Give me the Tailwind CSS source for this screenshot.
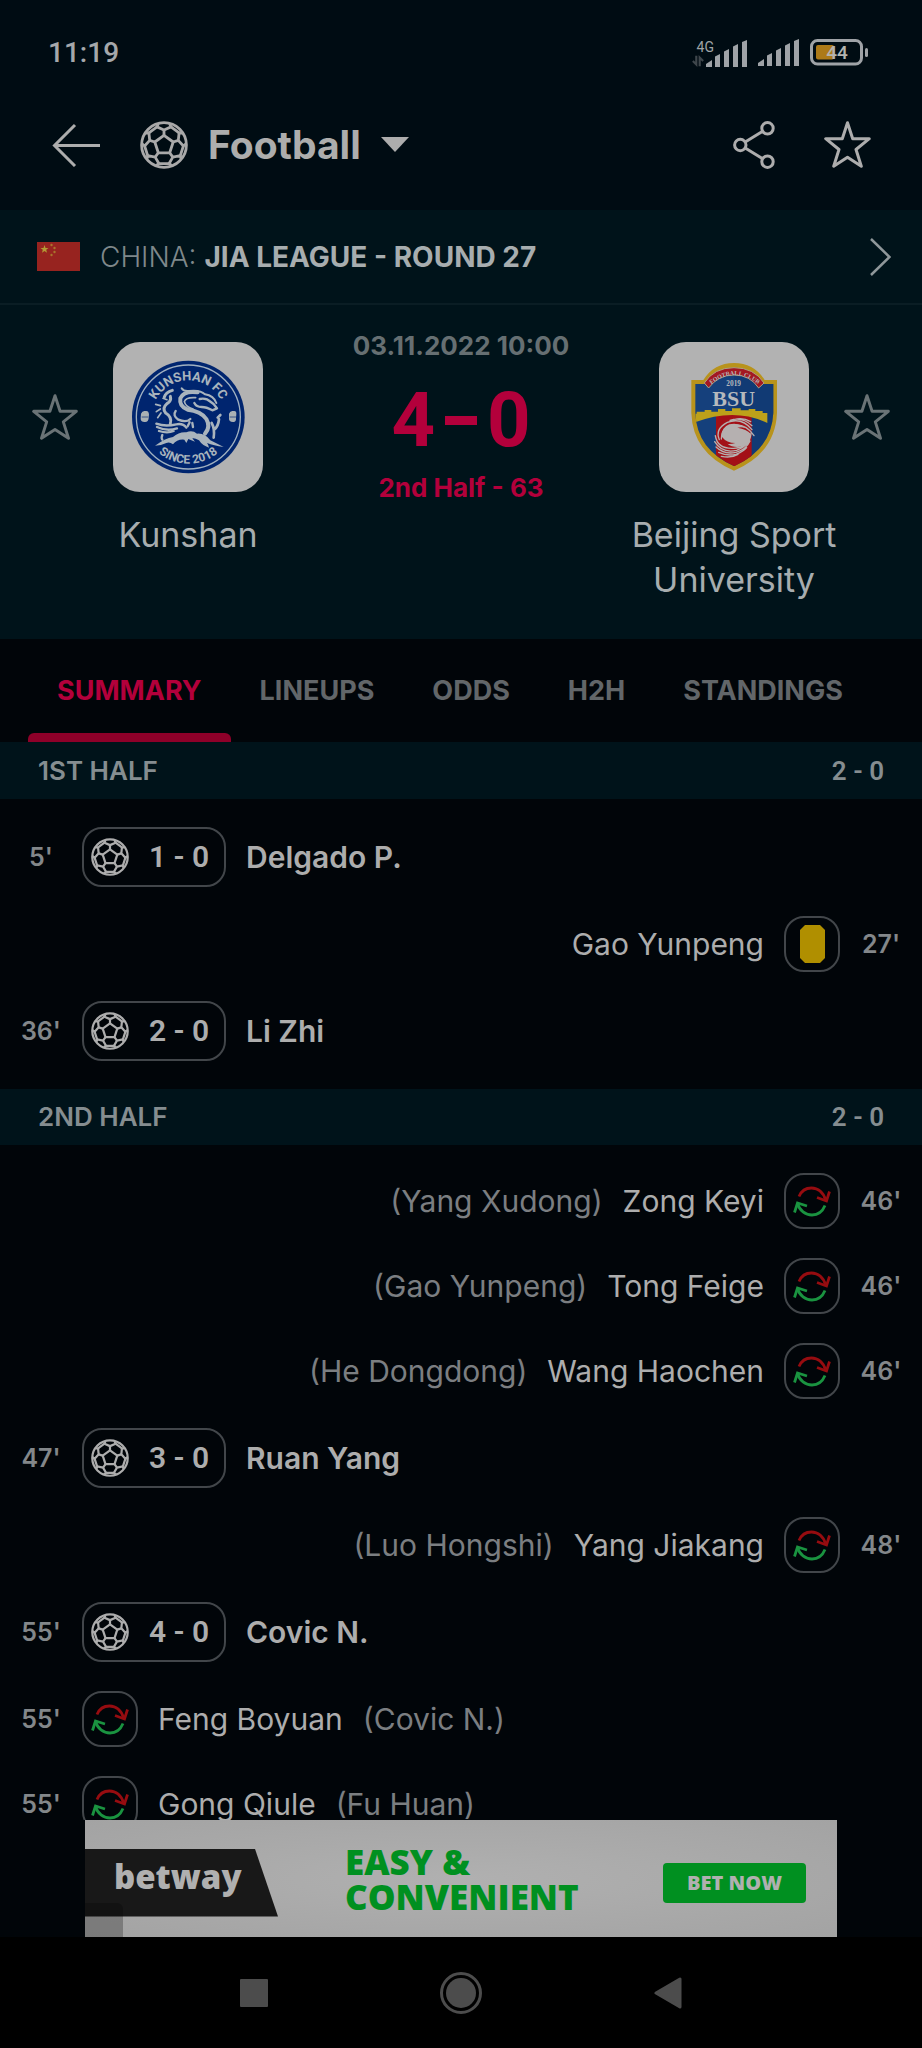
<!DOCTYPE html>
<html lang="en">
<head>
<meta charset="utf-8">
<meta name="viewport" content="width=device-width, initial-scale=1">
<title>Kunshan - Beijing Sport University</title>
<script src="https://cdn.jsdelivr.net/npm/@tailwindcss/browser@4"></script>
</head>
<body class="bg-[#010509] text-[#adadad] font-['Inter','Liberation_Sans',sans-serif]">

<svg class="hidden" aria-hidden="true">
  <symbol id="ball" viewBox="0 0 48 48">
    <g fill="none" stroke="currentColor" stroke-width="2.8" stroke-linejoin="round">
      <circle cx="24" cy="24" r="22.4"/>
      <path d="M24 14.3 33.2 21 29.7 31.8H18.3L14.8 21Z"/>
      <path d="M24 14.3V9M33.2 21l5.1-1.6M29.7 31.8l3.1 4.3M18.3 31.8l-3.1 4.3M14.8 21l-5.1-1.6"/>
      <path d="M18.3 2.7 17 5.9 24 9l7-3.1-1.3-3.2M42.5 12l-3.4-.2-.8 7.6 5.1 5.6 2.6-2.2M41.1 37.8l-.8-3.2-7.5 1.5-3.8 6.6 2.9 1.8M6.9 37.8l.8-3.2 7.5 1.5 3.8 6.6-2.9 1.8M5.5 12l3.4-.2.8 7.6L4.6 25 2 22.8"/>
      <path d="M31 5.9l8.1 5.900M43.4 25l-3.1 9.600M29 42.700H19M7.7 34.600 4.600 25M8.900 11.800 17 5.900"/>
    </g>
  </symbol>
  <symbol id="star" viewBox="0 0 47 47">
    <path d="M23.500 1.800 28.700 17.700H45.300L32 28.500 37.300 45.200 23.500 36.200 9.700 45.200 15 28.500 1.700 17.700H18.300Z" fill="none" stroke="currentColor" stroke-width="3" stroke-linejoin="round"/>
  </symbol>
  <symbol id="swap" viewBox="0 0 38 32">
    <g fill="none" stroke-width="2.800">
      <path d="M6 11.500C8.500 5.500 13 3 18.500 3 25 3 30.500 7.500 32.500 15" stroke="#960c10"/>
      <path d="M24 12.500 33.500 16 36.500 6.500" stroke="#960c10"/>
      <path d="M32 20.500C29.500 26.500 24.500 30 19 30 12.500 30 6.500 25.500 4.500 18.500" stroke="#1a9340"/>
      <path d="M1.500 27.500 4.500 18 14 21" stroke="#1a9340"/>
    </g>
  </symbol>
  <symbol id="signal" viewBox="0 0 42 27">
    <path d="M0 27v-3l6-4v7ZM9 27V16.500l5-2.500v13ZM18 27V11.500L23 9v18ZM27 27V6.500L32 4v23ZM36 27V2l5-2v27Z" fill="#9fa3a7"/>
  </symbol>
</svg>

<div class="flex h-screen flex-col">
  <header class="bg-[#000c13]">
    <div class="flex h-[81px] items-center justify-between pt-6 pr-[53px] pl-12">
      <span class="font-['Roboto'] text-[28px] leading-8 font-medium text-[#a5a8ab]">11:19</span>
      <div class="flex items-center gap-2.5">
        <div class="flex items-end">
          <div class="-mr-2 flex flex-col items-end">
            <span class="font-['Roboto'] text-[14px] leading-4 text-[#9fa3a7]">4G</span>
            <svg class="mr-2.5 h-3 w-3" viewBox="0 0 14 12" fill="none" stroke="#3f474c" stroke-width="2.500"><path d="M5 0v10L1 6M9 12V2L13 6"/></svg>
          </div>
          <svg class="h-[27px] w-[42px]"><use href="#signal"/></svg>
        </div>
        <svg class="h-[27px] w-[42px]"><use href="#signal"/></svg>
        <svg class="h-[27px] w-[59px]" viewBox="0 0 59 27" aria-label="Battery 44%">
          <rect x="1.500" y="1.500" width="50" height="23.500" rx="6" fill="none" stroke="#9fa3a7" stroke-width="3"/>
          <rect x="6" y="6" width="18" height="14.500" rx="2" fill="#ad7a18"/>
          <rect x="55" y="9" width="3" height="9" rx="1.500" fill="#9fa3a7"/>
          <text x="27" y="20" text-anchor="middle" font-family="Roboto" font-weight="500" font-size="19" fill="#b4b4b0">44</text>
        </svg>
      </div>
    </div>
    <div class="flex h-[129px] items-center pr-[51px] pb-0.5 pl-[52px]">
      <button type="button" aria-label="Back">
        <svg class="h-[44px] w-[48px]" viewBox="0 0 48 44" fill="none" stroke="#adadad" stroke-width="3"><path d="M23 2 2.500 22.500 23 43M2.500 22.500H48"/></svg>
      </button>
      <button type="button" class="ml-10 flex items-center gap-5">
        <svg class="size-[48px] text-[#a9a9a9]"><use href="#ball"/></svg>
        <span class="text-[39px] leading-12 font-bold">Football</span>
        <svg class="h-[15px] w-7" viewBox="0 0 28 15"><path d="M0 0H28L14 15Z" fill="#adadad"/></svg>
      </button>
      <div class="ml-auto flex items-center gap-[49px]">
        <button type="button" aria-label="Share">
          <svg class="h-[48px] w-[42px]" viewBox="0 0 42 48" fill="none" stroke="#adadad" stroke-width="3"><circle cx="34.500" cy="7.300" r="5.700"/><circle cx="7.300" cy="24" r="5.700"/><circle cx="34.500" cy="40.700" r="5.700"/><path d="M12.200 21 29.700 10.300M12.200 27 29.700 37.700"/></svg>
        </button>
        <button type="button" aria-label="Add match to favourites"><svg class="size-[47px]"><use href="#star"/></svg></button>
      </div>
    </div>
  </header>

  <section class="bg-[#00131a]">
    <a href="#league" class="flex h-[95px] items-center border-b-2 border-[#0a1d24] pr-[31px] pl-[37px] text-[28px] leading-8">
      <svg class="h-[29px] w-[43px]" viewBox="0 0 43 29"><path fill="#97231f" d="M0 0H43V29H0Z"/><path fill="#b39b35" d="m7.500 3 1 3h3L9.200 7.800l.8 3L7.500 9 5 10.800l.8-3L3.500 6h3Z"/><g fill="#a9742c"><circle cx="14.500" cy="3" r="1.200"/><circle cx="17.500" cy="6" r="1.200"/><circle cx="17.500" cy="10" r="1.200"/><circle cx="14.500" cy="13" r="1.200"/></g></svg>
      <span class="ml-5 font-light text-[#7f888b]">CHINA:</span>
      <span class="ml-2 font-bold text-[#a7adaf]">JIA LEAGUE - ROUND 27</span>
      <svg class="ml-auto h-[38px] w-[21px]" viewBox="0 0 21 38" fill="none" stroke="#8f979a" stroke-width="2.500"><path d="M1 1 19.500 19 1 37"/></svg>
    </a>

    <div class="flex min-h-[334px] items-start justify-between px-8 pt-[25px] pb-6">
      <div class="flex pt-3">
        <button type="button" aria-label="Add Kunshan to favourites" class="flex h-[150px] items-center text-[#6a7376]"><svg class="size-[46px]"><use href="#star"/></svg></button>
        <div class="flex w-[220px] flex-col items-center">
          <div class="size-[150px] overflow-hidden rounded-[27px] bg-[#b2b2b2]">
            <svg class="size-full" viewBox="8 7 450 450" aria-label="Kunshan FC">
              <defs><path id="kt" d="M124 232a110 110 0 0 1 220 0"/><path id="kb" d="M94 232a140 140 0 0 0 280 0"/></defs>
              <circle cx="234" cy="232" r="169" fill="#00256f"/>
              <circle cx="234" cy="232" r="156" fill="none" stroke="#9fb0c0" stroke-width="4"/>
              <g font-family="'Liberation Sans Narrow', Roboto" font-weight="700" font-size="39" fill="#a9b4bd" text-anchor="middle">
                <text><textPath href="#kt" startOffset="50%">KUNSHAN FC</textPath></text>
                <text font-size="36"><textPath href="#kb" startOffset="50%">SINCE 2018</textPath></text>
              </g>
              <g fill="#a9b0b4"><path d="M92 222q4-10 13-8 10-2 11 10l-1 12q-1 12-12 11-13 0-12-12ZM356 222q4-10 13-8 10-2 9 10l-1 12q1 12-9 11-13 0-12-12Z"/></g>
              <g fill="none" stroke="#00256f" stroke-width="2"><path d="M94 232h20M358 232h20"/></g>
              <g fill="none" stroke="#a9b4bd" stroke-linecap="round" stroke-linejoin="round">
                <path d="M214 146q6 10 22 8 34-4 48 10 26 4 34 26" stroke-width="6"/>
                <path d="M268 178q20-4 32 8 12 6 20 20l-14 6q-18-10-32-10-16 0-22-12" stroke-width="7"/>
                <path d="M262 158q-42-6-52 18-4 24 22 34 40 4 56 28 14 24-4 44" stroke-width="12"/>
                <path d="M256 174q-30-2-34 12 4 16 26 22" stroke-width="5"/>
                <path d="M186 152q-20 6-24 20M180 170q4 14-10 22-16 14-4 28 20 12 14 32" stroke-width="9"/>
                <path d="M170 180l-12-4M150 198l-14-4M150 208l-12 8M152 220l-10 14" stroke-width="5"/>
                <path d="M196 214q-10 14 8 26 24 10 36-2M238 248l-6 12M246 250l2 12" stroke-width="7"/>
                <path d="M138 252q26 10 60 2 20-4 30 10M140 262q30 14 60 4M146 274q26 8 44 0M156 286q-4 10 0 14" stroke-width="7"/>
                <path d="M304 250q10 18 6 44M326 238q-2 20-12 30M330 226l-8 8" stroke-width="8"/>
              </g>
              <path d="M134 318q30-22 54-26 18-16 40-14 18-8 32 4 24-2 40 20 20 10 40 20-30-4-50-12 6 8 6 14-20-6-30-22-14-8-20-6l8 10-20-8-6 12-6-10q-22-2-34 14-10-8-20-4-16 8-34 8Z" fill="#a9b4bd"/>
            </svg>
          </div>
          <span class="mt-5 text-center text-[34px] leading-[45px] text-[#a7adaf]">Kunshan</span>
        </div>
      </div>

      <div class="flex flex-col items-center text-[26px] leading-8 font-bold text-[#b3003b]">
        <time class="text-[#666f72]">03.11.2022 10:00</time>
        <div class="mt-5 flex items-center gap-2.5 font-['Roboto'] text-[76px] leading-[76px] font-bold"><span>4</span><span class="h-[9px] w-[32px] bg-[#b3003b]" role="img" aria-label="-"></span><span>0</span></div>
        <span class="mt-3.5">2nd Half - 63</span>
      </div>

      <div class="flex pt-3">
        <div class="flex w-[220px] flex-col items-center">
          <div class="size-[150px] overflow-hidden rounded-[27px] bg-[#b2b2b2]">
            <svg class="size-full" viewBox="27 7 450 450" aria-label="Beijing Sport University">
              <defs><path id="bt" d="M181 136q72-60 146 0"/><clipPath id="sh"><path d="M136 132H370V220q-4 108-117 160-113-52-117-160Z"/></clipPath></defs>
              <path d="M124 121H160Q192 70 252 70 312 70 344 121H381V220Q376 340 252 393 128 340 124 220Z" fill="#b8931c"/>
              <path d="M136 133H168Q198 84 252 84 308 84 338 133H370V220Q364 330 252 379 140 330 136 220Z" fill="#15407c"/>
              <path d="M252 84q56 0 86 49h32v87q-6 110-118 159Z" fill="#0c3168" opacity=".4"/>
              <g clip-path="url(#sh)">
                <path d="M198 222H305V390H198Z" fill="#a31017"/>
                <path d="M130 222h10v-6h24v-5h20v5h20v-8h22v6h20v-8h26v6h24v-4h20v6h22v6h14v30q-100-48-222 0Z" fill="#bda11a"/>
              </g>
              <path d="M163 130Q192 84 252 84 312 84 342 130L326 145Q300 106 252 106 204 106 176 145Z" fill="#a31822" stroke="#b0a080" stroke-width="3"/>
              <g fill="#b5b9bd" font-family="'Liberation Serif'" font-weight="700" text-anchor="middle">
                <text font-size="18"><textPath href="#bt" startOffset="50%">FOOTBALL CLUB</textPath></text>
                <text x="251" y="138" font-size="22">2019</text>
                <text x="251" y="200" font-size="66">BSU</text>
              </g>
              <g fill="none" stroke="#b5b0b0" stroke-width="4" stroke-linecap="round">
                <path d="M306 270q-30-38-74-22-38 20-24 52M312 288q-26-40-70-30-30 12-28 40M306 258q-30-28-66-16M302 246q-24-14-50-6"/>
                <path d="M196 288q6 40 54 38 46-2 54-48M194 306q22 36 66 26 38-14 42-44M198 322q26 24 60 16 30-8 42-34M206 338q26 12 52 6 22-8 32-20M214 350q30 6 50-6"/>
              </g>
              <path d="M296 270q-30-24-58-16-26 10-22 38 14 18 40 18-16 4-24 2 18 14 44 8 28-10 26-38-12-14-40-18 20-4 34 6Z" fill="#b5b0b0"/>
            </svg>
          </div>
          <span class="mt-5 text-center text-[34px] leading-[45px] text-[#a7adaf]">Beijing Sport University</span>
        </div>
        <button type="button" aria-label="Add Beijing Sport University to favourites" class="flex h-[150px] items-center text-[#6a7376]"><svg class="size-[46px]"><use href="#star"/></svg></button>
      </div>
    </div>
  </section>

  <nav class="flex h-[103px] shrink-0 pl-7 text-[27px] leading-8 font-bold text-[#626669]">
    <button type="button" class="relative px-[29px] text-[#b3003b]">SUMMARY<span class="absolute inset-x-0 bottom-0 h-[9px] rounded-t-md bg-[#8e0029]"></span></button>
    <button type="button" class="px-[29px]">LINEUPS</button>
    <button type="button" class="px-[29px]">ODDS</button>
    <button type="button" class="px-[29px]">H2H</button>
    <button type="button" class="px-[29px]">STANDINGS</button>
  </nav>

  <main class="min-h-0 flex-1 overflow-y-auto text-[30px] leading-9 [scrollbar-width:none]">
    <h2 class="flex h-[57px] items-center justify-between bg-[#00131a] px-[38px] text-[26px] font-semibold text-[#858d90]"><span>1ST HALF</span><span class="font-['Roboto']">2 - 0</span></h2>
    <ul class="flex flex-col gap-[29px] pt-7 pb-7">
      <li class="flex items-center">
        <span class="w-[82px] text-center text-[25px] font-semibold text-[#83878a]">5'</span>
        <span class="flex h-[60px] w-[144px] items-center gap-5 rounded-[20px] border-2 border-[#42464a] pl-[7px] font-['Roboto'] font-semibold"><svg class="size-[38px]"><use href="#ball"/></svg>1 - 0</span>
        <span class="ml-5 font-semibold">Delgado P.</span>
      </li>
      <li class="flex flex-row-reverse items-center">
        <span class="w-[82px] text-center text-[25px] font-semibold text-[#83878a]">27'</span>
        <span class="flex size-[56px] items-center justify-center rounded-[20px] border-2 border-[#42464a]"><svg class="h-[38px] w-[25px]" viewBox="0 0 25 38"><path d="M5 0H20L25 5V33L20 38H5L0 33V5Z" fill="#b08f00"/></svg></span>
        <span class="mr-5">Gao Yunpeng</span>
      </li>
      <li class="flex items-center">
        <span class="w-[82px] text-center text-[25px] font-semibold text-[#83878a]">36'</span>
        <span class="flex h-[60px] w-[144px] items-center gap-5 rounded-[20px] border-2 border-[#42464a] pl-[7px] font-['Roboto'] font-semibold"><svg class="size-[38px]"><use href="#ball"/></svg>2 - 0</span>
        <span class="ml-5 font-semibold">Li Zhi</span>
      </li>
    </ul>
    <h2 class="flex h-[56px] items-center justify-between bg-[#00131a] px-[38px] text-[26px] font-semibold text-[#858d90]"><span>2ND HALF</span><span class="font-['Roboto']">2 - 0</span></h2>
    <ul class="flex flex-col gap-[29px] pt-7 pb-7">
      <li class="flex flex-row-reverse items-center">
        <span class="w-[82px] text-center text-[25px] font-semibold text-[#83878a]">46'</span>
        <span class="flex size-[56px] items-center justify-center rounded-[20px] border-2 border-[#42464a]"><svg class="h-8 w-[38px]"><use href="#swap"/></svg></span>
        <span class="mr-5">Zong Keyi</span><span class="mr-5 text-[#7b7e81]">(Yang Xudong)</span>
      </li>
      <li class="flex flex-row-reverse items-center">
        <span class="w-[82px] text-center text-[25px] font-semibold text-[#83878a]">46'</span>
        <span class="flex size-[56px] items-center justify-center rounded-[20px] border-2 border-[#42464a]"><svg class="h-8 w-[38px]"><use href="#swap"/></svg></span>
        <span class="mr-5">Tong Feige</span><span class="mr-5 text-[#7b7e81]">(Gao Yunpeng)</span>
      </li>
      <li class="flex flex-row-reverse items-center">
        <span class="w-[82px] text-center text-[25px] font-semibold text-[#83878a]">46'</span>
        <span class="flex size-[56px] items-center justify-center rounded-[20px] border-2 border-[#42464a]"><svg class="h-8 w-[38px]"><use href="#swap"/></svg></span>
        <span class="mr-5">Wang Haochen</span><span class="mr-5 text-[#7b7e81]">(He Dongdong)</span>
      </li>
      <li class="flex items-center">
        <span class="w-[82px] text-center text-[25px] font-semibold text-[#83878a]">47'</span>
        <span class="flex h-[60px] w-[144px] items-center gap-5 rounded-[20px] border-2 border-[#42464a] pl-[7px] font-['Roboto'] font-semibold"><svg class="size-[38px]"><use href="#ball"/></svg>3 - 0</span>
        <span class="ml-5 font-semibold">Ruan Yang</span>
      </li>
      <li class="flex flex-row-reverse items-center">
        <span class="w-[82px] text-center text-[25px] font-semibold text-[#83878a]">48'</span>
        <span class="flex size-[56px] items-center justify-center rounded-[20px] border-2 border-[#42464a]"><svg class="h-8 w-[38px]"><use href="#swap"/></svg></span>
        <span class="mr-5">Yang Jiakang</span><span class="mr-5 text-[#7b7e81]">(Luo Hongshi)</span>
      </li>
      <li class="flex items-center">
        <span class="w-[82px] text-center text-[25px] font-semibold text-[#83878a]">55'</span>
        <span class="flex h-[60px] w-[144px] items-center gap-5 rounded-[20px] border-2 border-[#42464a] pl-[7px] font-['Roboto'] font-semibold"><svg class="size-[38px]"><use href="#ball"/></svg>4 - 0</span>
        <span class="ml-5 font-semibold">Covic N.</span>
      </li>
      <li class="flex items-center">
        <span class="w-[82px] text-center text-[25px] font-semibold text-[#83878a]">55'</span>
        <span class="flex size-[56px] items-center justify-center rounded-[20px] border-2 border-[#42464a]"><svg class="h-8 w-[38px]"><use href="#swap"/></svg></span>
        <span class="ml-5">Feng Boyuan</span><span class="ml-5 text-[#7b7e81]">(Covic N.)</span>
      </li>
      <li class="flex items-center">
        <span class="w-[82px] text-center text-[25px] font-semibold text-[#83878a]">55'</span>
        <span class="flex size-[56px] items-center justify-center rounded-[20px] border-2 border-[#42464a]"><svg class="h-8 w-[38px]"><use href="#swap"/></svg></span>
        <span class="ml-5">Gong Qiule</span><span class="ml-5 text-[#7b7e81]">(Fu Huan)</span>
      </li>
    </ul>
  </main>

  <aside class="relative mx-auto flex h-[117px] w-[752px] max-w-full shrink-0 items-center bg-radial from-[#b0b0b0] to-[#a3a3a3] pt-2 font-['Open_Sans'] font-extrabold">
    <div class="flex h-[68px] w-[193px] items-center bg-[#181818] pb-3 pl-[29px] text-[33px] leading-10 text-[#b0b0b0] [clip-path:polygon(0_0,88%_0,100%_100%,0_100%)]">betway</div>
    <p class="mb-2 ml-[67px] text-[35px] leading-[35px] text-[#009020]">EASY &amp;<br>CONVENIENT</p>
    <a href="#bet" class="mr-[31px] ml-auto flex h-10 w-[143px] items-center justify-center rounded-[4px] bg-[#009020] text-[20px] leading-6 text-[#b0b0b0]">BET NOW</a>
    <span class="absolute bottom-0 left-0 h-[34px] w-[38px] rounded-tr-md bg-black/25"></span>
  </aside>

  <div class="flex h-[111px] shrink-0 items-center justify-center gap-[163px] bg-black text-[#4c4c4c]">
    <button type="button" aria-label="Recent apps" class="flex size-[44px] items-center justify-center"><svg class="size-7" viewBox="0 0 28 28"><rect width="28" height="28" rx="1" fill="currentColor"/></svg></button>
    <button type="button" aria-label="Home"><svg class="size-[44px]" viewBox="0 0 44 44"><circle cx="22" cy="22" r="19.500" fill="none" stroke="currentColor" stroke-width="3"/><circle cx="22" cy="22" r="15" fill="currentColor"/></svg></button>
    <button type="button" aria-label="Back" class="flex size-[44px] items-center justify-center"><svg class="h-8 w-7" viewBox="0 0 28 32"><path d="M2 16 26 2V30Z" fill="currentColor" stroke="currentColor" stroke-width="3" stroke-linejoin="round"/></svg></button>
  </div>
</div>
</body>
</html>
